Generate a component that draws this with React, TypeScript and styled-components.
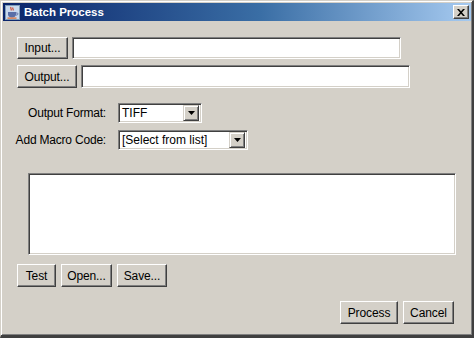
import React from "react";
import styled, { createGlobalStyle } from "styled-components";

const Global = createGlobalStyle`
  html, body { margin: 0; padding: 0; background: #d4d0c8; }
  body { font-family: "Liberation Sans", Arial, sans-serif; font-size: 12px; }
`;

const Frame = styled.div`
  box-sizing: border-box;
  width: 474px;
  height: 338px;
  background: #d4d0c8;
  border-style: solid;
  border-width: 1px 2px 3px 1px;
  border-color: #d4d0c8 #404040 #404040 #d4d0c8;
  box-shadow: inset 1px 1px #ffffff, inset -1px -1px #808080;
  padding: 2px 1px 1px 2px;
  display: flex;
  flex-direction: column;
`;

const TitleBar = styled.div`
  height: 18px;
  display: flex;
  align-items: center;
  padding: 0 2px 0 2px;
  background: linear-gradient(to right, #0a246a 0%, #3a6ea5 55%, #a6caf0 100%);
  color: #fff;
  font-family: "Liberation Sans", Tahoma, sans-serif;
  font-weight: bold;
  font-size: 11.5px;
  gap: 4px;
`;

const TitleText = styled.span`
  flex: 1;
`;

const CloseBtn = styled.div`
  box-sizing: border-box;
  width: 16px;
  height: 14px;
  background: #d4d0c8;
  border-style: solid;
  border-width: 1px;
  border-color: #ffffff #404040 #404040 #ffffff;
  box-shadow: inset -1px -1px #808080;
  display: flex;
  align-items: center;
  justify-content: center;
`;

const Content = styled.div`
  flex: 1;
  display: flex;
  flex-direction: column;
  padding: 16px 17px 0 14px;
`;

const Row = styled.div<{ $mt?: number; $h?: number; $gap?: number }>`
  display: flex;
  align-items: stretch;
  gap: ${(p) => p.$gap ?? 4}px;
  height: ${(p) => p.$h ?? 22}px;
  margin-top: ${(p) => p.$mt ?? 0}px;
`;

const Button = styled.button<{ $w: number }>`
  box-sizing: border-box;
  width: ${(p) => p.$w}px;
  padding: 0;
  margin: 0;
  background: #d4d0c8;
  color: #000;
  font-family: "Liberation Sans", Arial, sans-serif;
  font-size: 12px;
  letter-spacing: -0.1px;
  border-style: solid;
  border-width: 1px;
  border-color: #ffffff #404040 #404040 #ffffff;
  box-shadow: inset -1px -1px #808080;
  display: flex;
  align-items: center;
  justify-content: center;
`;

const Sunken = styled.div`
  box-sizing: border-box;
  background: #fff;
  border-style: solid;
  border-width: 1px;
  border-color: #808080 #ffffff #ffffff #808080;
  box-shadow: inset 1px 1px #404040, inset -1px -1px #d4d0c8;
`;

const TextField = styled(Sunken)`
  width: 329px;
`;

const FormRow = styled.div<{ $mt: number }>`
  display: flex;
  align-items: center;
  height: 20px;
  margin-top: ${(p) => p.$mt}px;
`;

const Label = styled.div`
  width: 89px;
  display: flex;
  justify-content: flex-end;
  white-space: nowrap;
  margin-right: 12px;
  color: #000;
  letter-spacing: -0.2px;
`;

const Select = styled(Sunken)<{ $w: number }>`
  width: ${(p) => p.$w}px;
  height: 20px;
  display: flex;
  align-items: center;
  padding: 2px;
  color: #000;
`;

const SelectText = styled.span`
  flex: 1;
  padding-left: 1px;
  white-space: nowrap;
  overflow: hidden;
`;

const ArrowBtn = styled.div`
  box-sizing: border-box;
  width: 16px;
  height: 16px;
  background: #d4d0c8;
  border-style: solid;
  border-width: 1px;
  border-color: #d4d0c8 #404040 #404040 #d4d0c8;
  box-shadow: inset 1px 1px #fff, inset -1px -1px #808080;
  display: flex;
  align-items: center;
  justify-content: center;
`;

const TextArea = styled(Sunken)`
  margin: 23px 0 0 11px;
  width: 428px;
  height: 82px;
`;

const BottomRow = styled.div`
  display: flex;
  justify-content: flex-end;
  gap: 5px;
  height: 23px;
  margin-top: 14px;
`;

const Arrow = () => (
  <svg width="7" height="4" viewBox="0 0 7 4">
    <path d="M0 0h7L3.5 4z" fill="#000" />
  </svg>
);

const JavaIcon = () => (
  <svg width="15" height="15" viewBox="0 0 15 15">
    <rect x="0" y="0" width="15" height="15" fill="#c9d9ee" />
    <rect x="0.5" y="0.5" width="14" height="14" fill="none" stroke="#7f9db9" />
    <path d="M6 2c-1 1.5 1 2 0 3.5M8 2.5c-1 1.3 1 1.8 0 3" stroke="#d04020" strokeWidth="1.1" fill="none" />
    <path d="M3 7h8v2.5c0 2-1.8 3-4 3s-4-1-4-3z" fill="#5a6fa8" />
    <path d="M11 8h1.2c1 0 1 2 -0.5 2H11" stroke="#5a6fa8" strokeWidth="1" fill="none" />
    <rect x="2.5" y="12.5" width="9" height="1.2" fill="#e06a2a" />
  </svg>
);

const CloseX = () => (
  <svg width="8" height="7" viewBox="0 0 8 7">
    <path d="M0 0h2l2 2.3L6 0h2L5 3.5 8 7H6L4 4.7 2 7H0l3-3.5z" fill="#000" />
  </svg>
);

export default function App() {
  return (
    <>
      <Global />
      <Frame>
        <TitleBar>
          <JavaIcon />
          <TitleText>Batch Process</TitleText>
          <CloseBtn>
            <CloseX />
          </CloseBtn>
        </TitleBar>
        <Content>
          <Row>
            <Button $w={51}>Input...</Button>
            <TextField />
          </Row>
          <Row $mt={6} $h={23}>
            <Button $w={60}>Output...</Button>
            <TextField />
          </Row>
          <FormRow $mt={15}>
            <Label>Output Format:</Label>
            <Select $w={84}>
              <SelectText>TIFF</SelectText>
              <ArrowBtn>
                <Arrow />
              </ArrowBtn>
            </Select>
          </FormRow>
          <FormRow $mt={7}>
            <Label>Add Macro Code:</Label>
            <Select $w={130}>
              <SelectText>[Select from list]</SelectText>
              <ArrowBtn>
                <Arrow />
              </ArrowBtn>
            </Select>
          </FormRow>
          <TextArea />
          <Row $mt={9} $h={23} $gap={5}>
            <Button $w={39}>Test</Button>
            <Button $w={51}>Open...</Button>
            <Button $w={50}>Save...</Button>
          </Row>
          <BottomRow>
            <Button $w={58}>Process</Button>
            <Button $w={51}>Cancel</Button>
          </BottomRow>
        </Content>
      </Frame>
    </>
  );
}
